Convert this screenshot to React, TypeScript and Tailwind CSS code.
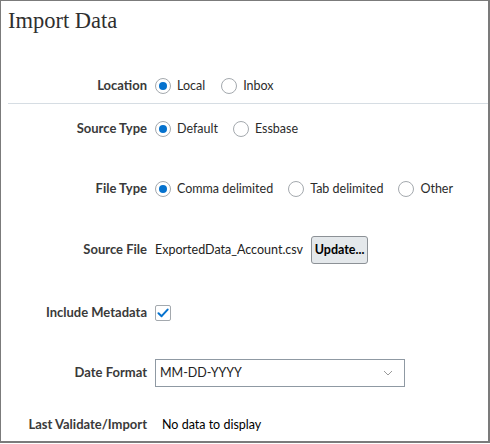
import React from "react";

const font = { fontFamily: "Lato, 'Noto Sans', sans-serif" };

function Radio({ checked, label }: { checked?: boolean; label: string }) {
  return (
    <div className="flex items-center">
      <span className="flex h-[16px] w-[16px] items-center justify-center rounded-full border border-[#a4a9ae] bg-white">
        {checked && <span className="block h-[8px] w-[8px] rounded-full bg-[#0572ce]" />}
      </span>
      <span className="ml-[6px] text-[12.5px] text-[#2b2b2b]">{label}</span>
    </div>
  );
}

function Row({
  label,
  children,
  className,
}: {
  label: string;
  children: React.ReactNode;
  className: string;
}) {
  return (
    <div className={"flex h-[30px] items-center " + className}>
      <div className="w-[146px] shrink-0 text-right text-[13px] font-bold text-[#3a3a3a]">{label}</div>
      <div className="ml-[8px] flex items-center">{children}</div>
    </div>
  );
}

export default function App() {
  return (
    <div
      className="h-[443px] w-[490px] border-t border-l border-r-2 border-b-2 border-[#7b7b7b] bg-white"
      style={font}
    >
      <div
        className="h-[36px] pl-[7px] pt-[6px] text-[22.5px] leading-[28px] text-[#2f2f2f]"
        style={{ fontFamily: "'Liberation Serif', serif" }}
      >
        Import Data
      </div>

      <Row label="Location" className="mt-[34px]">
        <div className="flex items-center gap-[16px]">
          <Radio checked label="Local" />
          <Radio label="Inbox" />
        </div>
      </Row>

      <div className="ml-[7px] mt-[2px] h-px bg-[#d6dde3]" />

      <Row label="Source Type" className="mt-[10px]">
        <div className="flex items-center gap-[15px]">
          <Radio checked label="Default" />
          <Radio label="Essbase" />
        </div>
      </Row>

      <Row label="File Type" className="mt-[30px]">
        <div className="flex items-center gap-[15px]">
          <Radio checked label="Comma delimited" />
          <Radio label="Tab delimited" />
          <Radio label="Other" />
        </div>
      </Row>

      <Row label="Source File" className="mt-[31px]">
        <span className="text-[12.5px] text-[#222222]">ExportedData_Account.csv</span>
        <button className="ml-[8px] h-[28px] w-[57px] rounded-[3px] border border-[#8c9196] bg-[#e4e8eb] text-[12.5px] font-bold text-black">
          Update...
        </button>
      </Row>

      <Row label="Include Metadata" className="mt-[33px]">
        <span className="flex h-[16px] w-[16px] items-center justify-center rounded-[2px] border border-[#a4a9ae] bg-white">
          <svg width="12" height="12" viewBox="0 0 12 12" fill="none">
            <path d="M1.5 6.2 L4.6 9.2 L10.6 2.6" stroke="#0572ce" strokeWidth="2" strokeLinecap="round" strokeLinejoin="round" />
          </svg>
        </span>
      </Row>

      <Row label="Date Format" className="mt-[30px]">
        <div className="flex h-[28px] w-[250px] items-center justify-between border border-[#8f99a3] bg-white pl-[4px] pr-[11px]">
          <span className="text-[12.5px] text-[#222222]">MM-DD-YYYY</span>
          <svg width="10" height="6" viewBox="0 0 10 6" fill="none">
            <path d="M1 1 L5 5 L9 1" stroke="#9a9a9a" strokeWidth="1" />
          </svg>
        </div>
      </Row>

      <Row label="Last Validate/Import" className="mt-[22px]">
        <span className="ml-[7px] text-[12.5px] text-black">No data to display</span>
      </Row>
    </div>
  );
}
